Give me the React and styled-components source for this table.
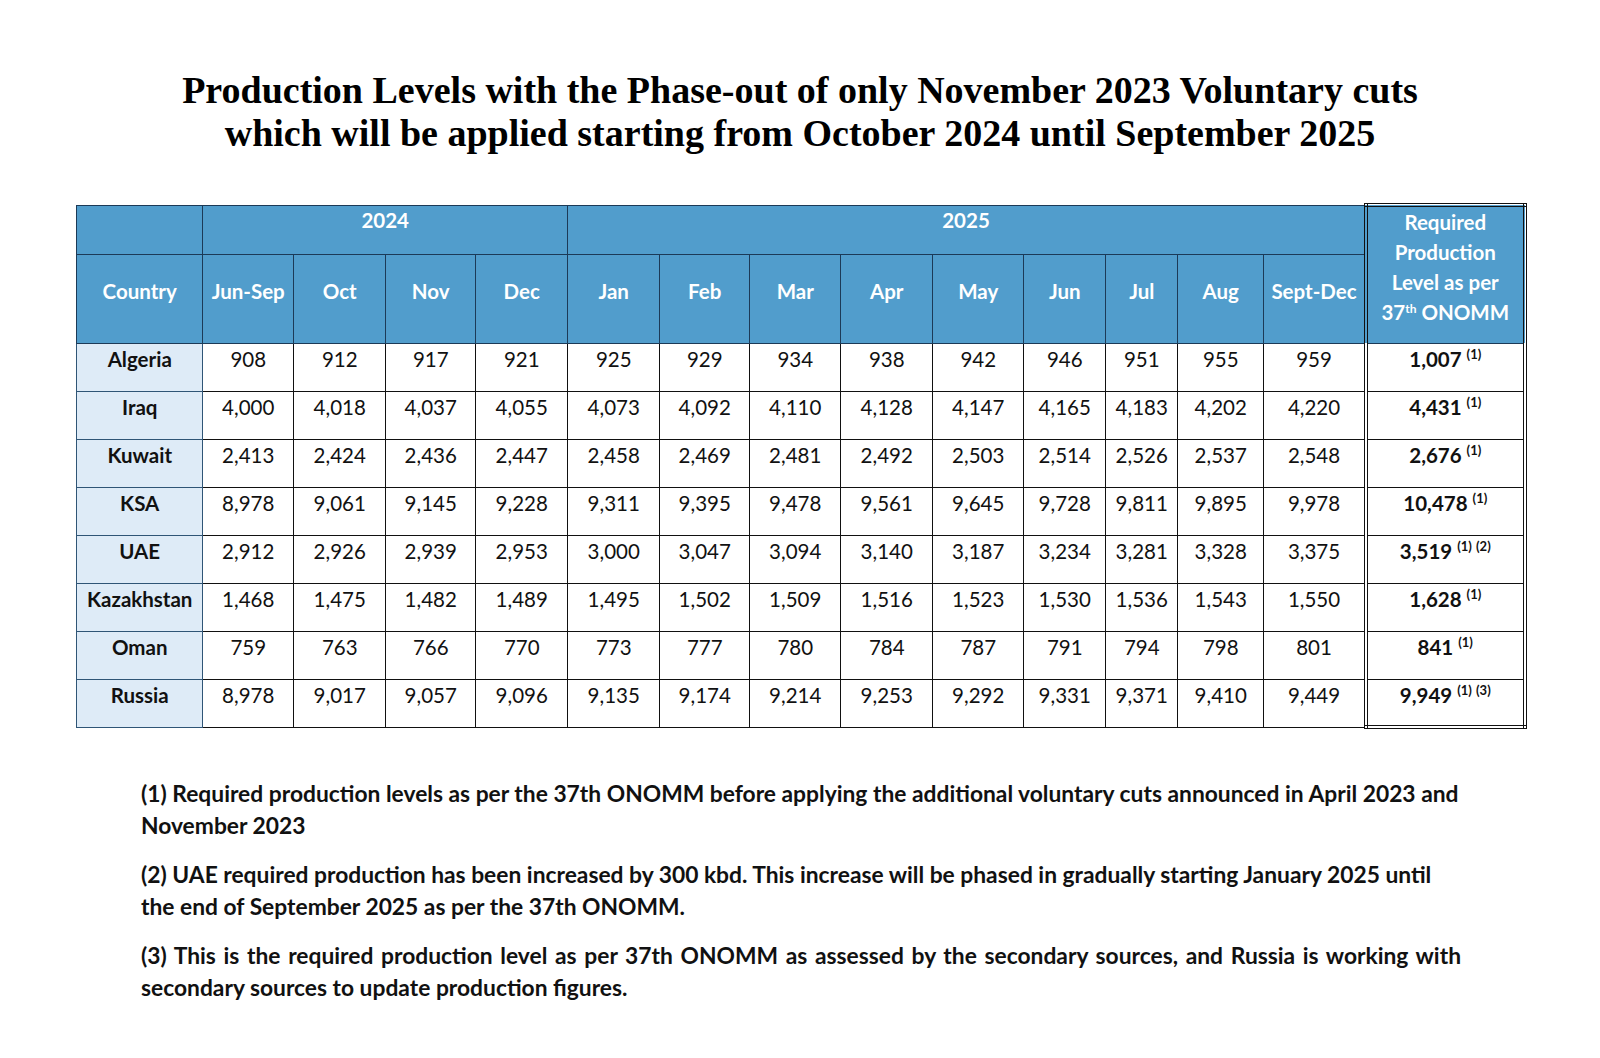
import React from "react";
import styled, { createGlobalStyle } from "styled-components";

const months2024 = ["Jun-Sep", "Oct", "Nov", "Dec"];
const months2025 = ["Jan", "Feb", "Mar", "Apr", "May", "Jun", "Jul", "Aug", "Sept-Dec"];
const colWidths = [126, 91, 92, 90, 92, 92, 90, 91, 92, 91, 82, 72, 86, 102, 159];

const rows = [
  { country: "Algeria", values: ["908", "912", "917", "921", "925", "929", "934", "938", "942", "946", "951", "955", "959"], required: "1,007", notes: ["(1)"] },
  { country: "Iraq", values: ["4,000", "4,018", "4,037", "4,055", "4,073", "4,092", "4,110", "4,128", "4,147", "4,165", "4,183", "4,202", "4,220"], required: "4,431", notes: ["(1)"] },
  { country: "Kuwait", values: ["2,413", "2,424", "2,436", "2,447", "2,458", "2,469", "2,481", "2,492", "2,503", "2,514", "2,526", "2,537", "2,548"], required: "2,676", notes: ["(1)"] },
  { country: "KSA", values: ["8,978", "9,061", "9,145", "9,228", "9,311", "9,395", "9,478", "9,561", "9,645", "9,728", "9,811", "9,895", "9,978"], required: "10,478", notes: ["(1)"] },
  { country: "UAE", values: ["2,912", "2,926", "2,939", "2,953", "3,000", "3,047", "3,094", "3,140", "3,187", "3,234", "3,281", "3,328", "3,375"], required: "3,519", notes: ["(1)", "(2)"] },
  { country: "Kazakhstan", values: ["1,468", "1,475", "1,482", "1,489", "1,495", "1,502", "1,509", "1,516", "1,523", "1,530", "1,536", "1,543", "1,550"], required: "1,628", notes: ["(1)"] },
  { country: "Oman", values: ["759", "763", "766", "770", "773", "777", "780", "784", "787", "791", "794", "798", "801"], required: "841", notes: ["(1)"] },
  { country: "Russia", values: ["8,978", "9,017", "9,057", "9,096", "9,135", "9,174", "9,214", "9,253", "9,292", "9,331", "9,371", "9,410", "9,449"], required: "9,949", notes: ["(1)", "(3)"] },
];

const notes = [
  {
    lines: [
      "(1) Required production levels as per the 37th ONOMM before applying the additional voluntary cuts announced in April 2023 and",
      "November 2023",
    ],
  },
  {
    lines: [
      "(2) UAE required production has been increased by 300 kbd. This increase will be phased in gradually starting January 2025 until",
      "the end of September 2025 as per the 37th ONOMM.",
    ],
  },
  {
    justify: true,
    lines: [
      "(3) This is the required production level as per 37th ONOMM as assessed by the secondary sources, and Russia is working with",
      "secondary sources to update production figures.",
    ],
  },
];

const App = () => {
  return (
    <Page>
      <GlobalStyle />
      <Title>
        Production Levels with the Phase-out of only November 2023 Voluntary cuts
        <br />
        which will be applied starting from October 2024 until September 2025
      </Title>

      <Grid>
        <colgroup>
          {colWidths.map((w, i) => (
            <col key={i} style={{ width: w }} />
          ))}
        </colgroup>
        <thead>
          <tr>
            <HeadCell $year />
            <HeadCell $year colSpan={4}>2024</HeadCell>
            <HeadCell $year colSpan={9}>2025</HeadCell>
            <RequiredHead rowSpan={2}>
              Required
              <br />
              Production
              <br />
              Level as per
              <br />
              37<Th>th</Th> ONOMM
            </RequiredHead>
          </tr>
          <tr>
            <HeadCell>Country</HeadCell>
            {[...months2024, ...months2025].map((m) => (
              <HeadCell key={m}>{m}</HeadCell>
            ))}
          </tr>
        </thead>
        <tbody>
          {rows.map((row, r) => (
            <tr key={row.country}>
              <CountryCell>{row.country}</CountryCell>
              {row.values.map((v, i) => (
                <ValueCell key={i}>{v}</ValueCell>
              ))}
              <RequiredCell $last={r === rows.length - 1}>
                {row.required}
                <Ref>{row.notes.join(" ")}</Ref>
              </RequiredCell>
            </tr>
          ))}
        </tbody>
      </Grid>

      <Notes>
        {notes.map((note, i) => (
          <Note key={i}>
            {note.lines.map((line, j) => (
              <NoteLine key={j} $justify={note.justify && j < note.lines.length - 1}>
                {line}
              </NoteLine>
            ))}
          </Note>
        ))}
      </Notes>
    </Page>
  );
};

export default App;

// Styled Components
const GlobalStyle = createGlobalStyle`
  html, body {
    margin: 0;
    padding: 0;
    background: #ffffff;
  }
`;

const Page = styled.main`
  width: 1600px;
  min-height: 1058px;
  padding-top: 69px;
  box-sizing: border-box;
  display: flex;
  flex-direction: column;
  align-items: center;
  font-family: Lato, "Open Sans", sans-serif;
  color: #111;
`;

const Title = styled.h1`
  margin: 0 0 48px;
  font-family: "Liberation Serif", "Times New Roman", serif;
  font-weight: 700;
  font-size: 38px;
  line-height: 43px;
  text-align: center;
  color: #000;
`;

const Grid = styled.table`
  border-collapse: collapse;
  table-layout: fixed;
  width: 1449px;
  margin-left: 3px;
`;

const HeadCell = styled.th`
  background: #519dcc;
  color: #ffffff;
  font-weight: 700;
  font-size: 20.5px;
  line-height: 24px;
  text-align: center;
  vertical-align: top;
  border: 1.5px solid #1c3a57;
  height: ${(p) => (p.$year ? "49px" : "89px")};
  padding: ${(p) => (p.$year ? "2px 2px 0" : "24px 2px 0")};
  box-sizing: border-box;
  white-space: nowrap;
`;

const RequiredHead = styled.th`
  background: #519dcc;
  color: #ffffff;
  font-weight: 700;
  font-size: 20.5px;
  line-height: 30px;
  text-align: center;
  vertical-align: top;
  padding: 0;
  border: 4px double #111;
  border-bottom: 1.5px solid #1c3a57;
`;

const Th = styled.sup`
  font-size: 12px;
  line-height: 0;
  vertical-align: 7px;
`;

const CountryCell = styled.th`
  background: #deebf7;
  color: #111;
  font-weight: 700;
  font-size: 20.5px;
  line-height: 24px;
  text-align: center;
  vertical-align: top;
  height: 48px;
  padding: 3px 0 0;
  box-sizing: border-box;
  border: 1.5px solid #2f5576;
`;

const ValueCell = styled.td`
  font-size: 20.5px;
  line-height: 24px;
  text-align: center;
  vertical-align: top;
  height: 48px;
  padding: 3px 0 0;
  box-sizing: border-box;
  border: 1.5px solid #111;
`;

const RequiredCell = styled(ValueCell)`
  font-weight: 700;
  border-left: 4px double #111;
  border-right: 4px double #111;
  border-bottom: ${(p) => (p.$last ? "4px double #111" : "1.5px solid #111")};
`;

const Ref = styled.sup`
  font-size: 13px;
  font-weight: 700;
  line-height: 0;
  vertical-align: 8px;
  margin-left: 5px;
  word-spacing: 1px;
`;

const Notes = styled.section`
  align-self: flex-start;
  margin: 48px 0 0 141px;
  width: 1320px;
  display: flex;
  flex-direction: column;
  gap: 17px;
`;

const Note = styled.div`
  display: flex;
  flex-direction: column;
`;

const NoteLine = styled.div`
  font-weight: 700;
  font-size: 22.8px;
  line-height: 32px;
  white-space: nowrap;
  text-align: ${(p) => (p.$justify ? "justify" : "left")};
  text-align-last: ${(p) => (p.$justify ? "justify" : "left")};
  ${(p) => p.$justify && "white-space: normal;"}
`;
